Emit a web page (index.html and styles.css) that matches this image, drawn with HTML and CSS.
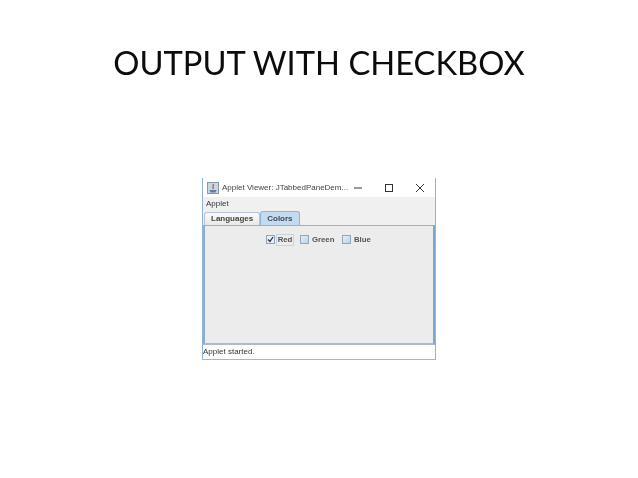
FILE: index.html
```html
<!DOCTYPE html>
<html lang="en">
<head>
<meta charset="utf-8">
<title>Output with checkbox</title>
<link rel="stylesheet" href="styles.css">
</head>
<body>
<h1 class="slide-title">OUTPUT WITH CHECKBOX</h1>
<div class="window">
  <div class="titlebar">
    <svg class="app-icon" width="12" height="12" viewBox="0 0 12 12">
      <rect x="0.5" y="0.5" width="11" height="11" fill="#c9d6e6" stroke="#8a97a8"/>
      <path d="M6 2C7.500 4 4.500 5 6.500 7" fill="none" stroke="#c8642a" stroke-width="1.400"/>
      <path d="M2.500 8h7l-1 2.500h-5z" fill="#5b7fa8"/>
    </svg>
    <span class="window-title">Applet Viewer: JTabbedPaneDem...</span>
    <div class="controls">
      <svg width="10" height="10" viewBox="0 0 10 10"><path d="M1 5h8" stroke="#333" stroke-width="1"/></svg>
      <svg width="10" height="10" viewBox="0 0 10 10"><rect x="1.500" y="1.500" width="7" height="7" fill="none" stroke="#333" stroke-width="1"/></svg>
      <svg width="10" height="10" viewBox="0 0 10 10"><path d="M1 1l8 8M9 1l-8 8" stroke="#333" stroke-width="1"/></svg>
    </div>
  </div>
  <div class="menubar">Applet</div>
  <div class="tabs">
    <div class="tab">Languages</div>
    <div class="tab tab-active">Colors</div>
  </div>
  <div class="panel">
    <label class="check check-focus"><span class="box box-on"><svg width="7" height="7" viewBox="0 0 7 7"><path d="M1 3.500l2 2 3-4.500" fill="none" stroke="#333" stroke-width="1.300"/></svg></span><span class="check-text">Red</span></label>
    <label class="check"><span class="box"></span><span class="check-text">Green</span></label>
    <label class="check"><span class="box"></span><span class="check-text">Blue</span></label>
  </div>
  <div class="status">Applet started.</div>
</div>
</body>
</html>
```
FILE: styles.css
```css
html, body {
  margin: 0;
  padding: 0;
  background: #fff;
}
body {
  width: 638px;
  height: 478px;
  overflow: hidden;
}
.slide-title {
  margin: 0;
  padding-top: 40px;
  height: 178px;
  box-sizing: border-box;
  text-align: center;
  font: 400 32.700px/46px "Lato", "Liberation Sans", sans-serif;
  color: #0c0c0c;
  filter: blur(0.3px);
}
.window {
  margin-left: 202px;
  width: 234px;
  height: 182px;
  box-sizing: border-box;
  border-left: 1px solid #8fb4d8;
  border-right: 1px solid #8fb4d8;
  border-bottom: 1px solid #8fbbe6;
  display: flex;
  flex-direction: column;
  font-family: "Liberation Sans", sans-serif;
  font-size: 8px;
  color: #333;
  filter: blur(0.35px);
}
.titlebar {
  height: 19px;
  display: flex;
  align-items: center;
  padding-left: 4px;
  background: #fff;
  flex: none;
}
.app-icon { flex: none; }
.window-title {
  margin-left: 3px;
  color: #444;
  white-space: nowrap;
  font-size: 8px;
}
.controls {
  margin-left: auto;
  display: flex;
  gap: 21px;
  padding-right: 10px;
}
.menubar {
  height: 14px;
  line-height: 14px;
  background: #f0f0f0;
  padding-left: 3px;
  flex: none;
}
.tabs {
  height: 14px;
  display: flex;
  align-items: flex-end;
  background: #f0f0f0;
  padding-left: 1px;
  flex: none;
}
.tab {
  height: 12px;
  line-height: 12px;
  padding: 0 6px 0 6px;
  border: 1px solid #b5c3d4;
  border-bottom: 0;
  border-radius: 3px 3px 0 0;
  background: linear-gradient(#fafafa, #e8e8e8);
  font-weight: 700;
  color: #444;
  font-size: 8px;
}
.tab-active {
  height: 13px;
  line-height: 13px;
  padding: 0 6px;
  background: #c4daf0;
  border-color: #8fb4d8;
  color: #3c4a58;
}
.panel {
  flex: 1;
  background: #ececec;
  border: 2px solid #8fb4d8;
  border-top-width: 1px;
  border-left-color: #89aed4;
  border-bottom-color: #a7bdd6;
  border-right-color: #7ea6d0;
  display: flex;
  justify-content: center;
  align-items: flex-start;
  gap: 7px;
  padding-top: 8px;
}
.check {
  display: flex;
  align-items: center;
  gap: 1.500px;
  height: 11px;
  font-weight: 700;
  color: #555;
  font-size: 7.800px;
}
.box {
  width: 7px;
  height: 7px;
  border: 1px solid #8ea6bf;
  background: linear-gradient(135deg, #e6eef6, #bcd2e8);
  display: flex;
  align-items: center;
  justify-content: center;
}
.box-on { background: #e8eef4; }
.check-text {
  padding: 0 1px;
  line-height: 10px;
}
.check-focus .check-text { outline: 1px solid #c9d3dd; }
.status {
  height: 14px;
  line-height: 14px;
  padding-left: 0;
  background: #fff;
  flex: none;
}
```
